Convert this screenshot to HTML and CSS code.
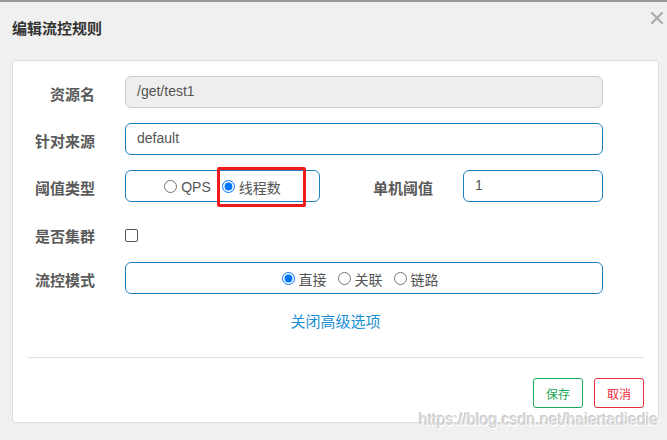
FILE: index.html
```html
<!DOCTYPE html>
<html lang="zh">
<head>
<meta charset="utf-8">
<title>编辑流控规则</title>
<link rel="stylesheet" href="styles.css">
</head>
<body>
<div class="dialog">
  <div class="header">
    <div class="title">编辑流控规则</div>
    <svg class="close" width="12" height="12" viewBox="0 0 12 12"><path d="M1 1L11 11M11 1L1 11" stroke="#b0b0b0" stroke-width="2.4" stroke-linecap="square"/></svg>
  </div>
  <div class="card">
    <div class="form">
      <div class="row">
        <div class="label">资源名</div>
        <div class="input disabled">/get/test1</div>
      </div>
      <div class="row">
        <div class="label">针对来源</div>
        <div class="input">default</div>
      </div>
      <div class="row">
        <div class="label">阈值类型</div>
        <div class="split">
          <div class="radio-box">
            <label class="opt"><input type="radio" name="grade">QPS</label>
            <label class="opt"><input type="radio" name="grade" checked>线程数</label>
            <div class="mark"></div>
          </div>
          <div class="label sub">单机阈值</div>
          <div class="input">1</div>
        </div>
      </div>
      <div class="row check-row">
        <div class="label">是否集群</div>
        <div class="check-wrap"><span class="check"></span></div>
      </div>
      <div class="row">
        <div class="label">流控模式</div>
        <div class="radio-box wide">
          <label class="opt"><input type="radio" name="mode" checked>直接</label>
          <label class="opt"><input type="radio" name="mode">关联</label>
          <label class="opt"><input type="radio" name="mode">链路</label>
        </div>
      </div>
    </div>
    <div class="link-row"><a class="link">关闭高级选项</a></div>
    <div class="sep"></div>
    <div class="footer">
      <button class="btn save">保存</button>
      <button class="btn cancel">取消</button>
    </div>
  </div>
  <div class="watermark">https://blog.csdn.net/haiertadiedie</div>
</div>
</body>
</html>
```

FILE: styles.css
```css
* { box-sizing: border-box; }
html, body { margin: 0; padding: 0; }
body {
  width: 667px;
  height: 440px;
  background: #f0f0f0;
  font-family: "Liberation Sans", "Noto Sans CJK SC", sans-serif;
  overflow: hidden;
}
.dialog {
  position: relative;
  height: 440px;
  border-top: 2px solid #999;
}
.header {
  display: flex;
  justify-content: space-between;
  align-items: flex-start;
  height: 58px;
  padding: 0 4px 0 12px;
}
.title {
  font-family: "Noto Sans CJK SC", sans-serif;
  font-weight: bold;
  font-size: 15px;
  color: #333;
  line-height: 20px;
  margin-top: 16px;
}
.close { margin-top: 10px; }
.card {
  margin: 0 8px 0 12px;
  background: #fff;
  border: 1px solid #ddd;
  border-radius: 4px;
  padding: 15px 14px 14px 14px;
}
.form {
  display: flex;
  flex-direction: column;
  gap: 15px;
}
.row {
  display: flex;
  align-items: center;
  height: 32px;
}
.label {
  width: 68px;
  flex: none;
  text-align: right;
  font-family: "Noto Sans CJK SC", sans-serif;
  font-weight: bold;
  font-size: 15px;
  color: #5a5a5a;
  margin-right: 30px;
  padding-top: 3px;
}
.input {
  width: 478px;
  height: 32px;
  border: 1px solid #1b7fc1;
  border-radius: 6px;
  padding: 0 11px;
  font-size: 14px;
  line-height: 29px;
  color: #555;
}
.input.disabled {
  background: #eee;
  border-color: #ccc;
}
.split {
  display: flex;
  align-items: center;
  width: 478px;
}
.radio-box {
  position: relative;
  width: 195px;
  height: 32px;
  border: 1px solid #1b7fc1;
  border-radius: 6px;
  display: flex;
  justify-content: center;
  align-items: center;
  gap: 11px;
  padding-top: 1px;
}
.radio-box.wide { width: 478px; padding-left: 0; padding-right: 8px; }
.opt {
  display: flex;
  align-items: center;
  font-family: "Liberation Sans", "Noto Sans CJK SC", sans-serif;
  font-size: 14px;
  color: #555;
}
.opt input {
  margin: 0 4px 0 0;
  width: 13px;
  height: 13px;
}
.mark {
  position: absolute;
  left: 91px;
  top: -4px;
  width: 89px;
  height: 40px;
  border: 3px solid #f01c1c;
  border-radius: 2px;
}
.label.sub {
  width: 113px;
  margin-right: 30px;
}
.split .input { width: 140px; }
.check-row { height: 30px; margin-top: 2px; margin-bottom: -2px; }
.check-wrap { display: flex; align-items: center; padding-top: 3px; }
.check {
  display: block;
  width: 13px;
  height: 13px;
  border: 1px solid #555;
  border-radius: 2px;
}
.link-row {
  text-align: center;
  margin-top: 16px;
  line-height: 22px;
}
.link {
  font-family: "Noto Sans CJK SC", sans-serif;
  font-size: 15px;
  color: #1a8fd5;
}
.sep {
  height: 1px;
  background: #e2e2e2;
  margin: 24px 0 0 0;
}
.footer {
  display: flex;
  justify-content: flex-end;
  gap: 11px;
  margin-top: 20px;
}
.btn {
  width: 50px;
  height: 30px;
  background: #fff;
  border-radius: 3px;
  font-family: "Noto Sans CJK SC", sans-serif;
  font-size: 12px;
  padding: 0;
}
.save { border: 1px solid #1aa756; color: #1aa756; }
.cancel { border: 1px solid #ee2a3e; color: #ee2a3e; }
.watermark {
  position: absolute;
  left: 419px;
  top: 409px;
  font-family: "Liberation Sans", sans-serif;
  font-size: 16px;
  color: #d8d8d8;
  text-shadow: 1px 1px 0 #fff, -1px -1px 0 #c8c8c8;
  white-space: nowrap;
}
```
